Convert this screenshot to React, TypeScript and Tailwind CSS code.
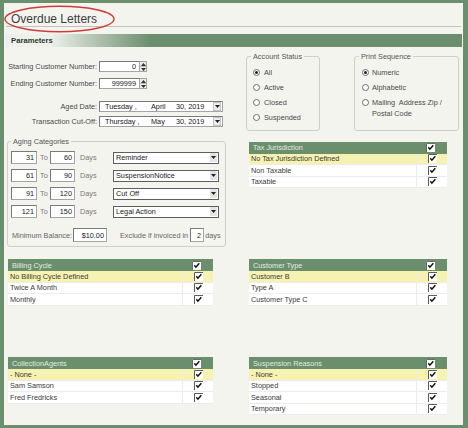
import React from "react";

const F = "font-['Liberation_Sans',Arial,sans-serif]";

function RowCheck() {
  return (
    <svg width="9" height="9" viewBox="0 0 9 9" className="block">
      <rect x="0" y="0" width="9" height="9" fill="#fff" />
      <path d="M0.5 9V0.5H9" stroke="#5a5a5a" fill="none" />
      <path d="M2.3 4.3L3.9 6.2L7.3 2.3" stroke="#111" strokeWidth="1.5" fill="none" />
    </svg>
  );
}

function HeadCheck() {
  return (
    <svg width="9" height="9" viewBox="0 0 9 9" className="block">
      <rect x="0" y="0" width="9" height="9" fill="#fff" />
      <path d="M0.5 9V0.5H9" stroke="#6a6a6a" fill="none" />
      <path d="M2.3 4.3L3.9 6.2L7.3 2.3" stroke="#111" strokeWidth="1.5" fill="none" />
    </svg>
  );
}

function Table({ title, rows, w }: { title: string; rows: string[]; w: string }) {
  return (
    <div className={`bg-white ${w}`}>
      <div className="flex h-[12px] items-center bg-[#6b8e6d] text-[#e2ece2]">
        <div className="flex-1 pl-[4px]">{title}</div>
        <div className="flex w-[31px] justify-center pr-[2px]">
          <HeadCheck />
        </div>
      </div>
      {rows.map((r, i) => (
        <div
          key={r}
          className={`flex h-[11.5px] items-center border-b border-[#ececec] ${i === 0 ? "bg-[#f6f2b2]" : "bg-white"}`}
        >
          <div className="flex-1 pl-[2px] text-[#3a3a3a]">{r}</div>
          <div className="flex h-full w-[31px] items-center justify-center border-l border-[#ececec]">
            <RowCheck />
          </div>
        </div>
      ))}
    </div>
  );
}

function DownTri() {
  return (
    <svg width="5" height="3" viewBox="0 0 5 3" className="block">
      <path d="M0 0L2.5 3L5 0Z" fill="#222" />
    </svg>
  );
}

function NumSpin({ value }: { value: string }) {
  return (
    <div className="ml-[2px] flex h-[11px]">
      <div className="flex w-[41px] items-center justify-end border border-[#a4a4a4] border-l-[#7a7a7a] border-t-[#7a7a7a] bg-white pr-[3px] text-[#222]">
        {value}
      </div>
      <div className="flex w-[7px] flex-col border-y border-r border-[#a4a4a4] bg-[#ebebeb]">
        <div className="flex flex-1 items-center justify-center border-b border-[#bdbdbd]">
          <svg width="5" height="3" viewBox="0 0 5 3" className="block">
            <path d="M0 3L2.5 0L5 3Z" fill="#333" />
          </svg>
        </div>
        <div className="flex flex-1 items-center justify-center">
          <svg width="5" height="3" viewBox="0 0 5 3" className="block">
            <path d="M0 0L2.5 3L5 0Z" fill="#333" />
          </svg>
        </div>
      </div>
    </div>
  );
}

function DateBox({ day, month }: { day: string; month: string }) {
  return (
    <div className="ml-[2px] flex h-[11px] w-[124px] items-center border border-[#a4a4a4] border-l-[#7a7a7a] border-t-[#7a7a7a] bg-white text-[#222]">
      <span className="w-[51px] whitespace-nowrap pl-[5px]">{day} ,</span>
      <span className="w-[25px] whitespace-nowrap">{month}</span>
      <span className="flex-1 whitespace-nowrap">30, 2019</span>
      <div className="mr-[1px] flex h-[9px] w-[8px] items-center justify-center border border-[#c4c4c4] bg-[#ececec]">
        <DownTri />
      </div>
    </div>
  );
}

function InBox({ w, children }: { w: string; children: React.ReactNode }) {
  return (
    <div
      className={`flex h-[13px] items-center justify-end border border-[#a4a4a4] border-l-[#7a7a7a] border-t-[#7a7a7a] bg-white pr-[2px] text-[#222] ${w}`}
    >
      {children}
    </div>
  );
}

function Drop({ label }: { label: string }) {
  return (
    <div className="flex h-[12px] w-[106px] items-center border border-[#5e5e5e] bg-white text-[#222]">
      <span className="flex-1 pl-[2px]">{label}</span>
      <div className="mr-[1px] flex h-[9px] w-[7px] items-center justify-center bg-[#e4e4e4]">
        <DownTri />
      </div>
    </div>
  );
}

function AgingRow({ a, b, label }: { a: string; b: string; label: string }) {
  return (
    <div className="mt-[5px] flex h-[13px] items-center">
      <InBox w="w-[26px]">{a}</InBox>
      <span className="ml-[3px] w-[10px] text-[#7a7a7a]">To</span>
      <InBox w="w-[25px]">{b}</InBox>
      <span className="ml-[5px] w-[33px] text-[#7a7a7a]">Days</span>
      <Drop label={label} />
    </div>
  );
}

function Radio({ on, children, gap }: { on?: boolean; children: React.ReactNode; gap: string }) {
  return (
    <div className="flex h-[15px] items-start pt-[2px] leading-[11px]">
      <div className="mt-[2px] flex h-[7px] w-[7px] shrink-0 items-center justify-center rounded-full border border-[#6e6e6e] bg-white">
        {on && <div className="h-[3px] w-[3px] rounded-full bg-[#222]" />}
      </div>
      <div className={`${gap} text-[#4a4a4a]`}>{children}</div>
    </div>
  );
}

export default function App() {
  return (
    <div
      className={`${F} h-[428px] w-[468px] bg-[#6b8e6d] pb-[3px] pl-[4px] pr-[5px] pt-[3px] text-[7.3px] leading-[9px]`}
    >
      <div className="relative h-full bg-[#f4f4ee]">
        <div className="pl-[7px] pt-[9px] text-[12px] leading-[14px] text-[#3c3c3c]">Overdue Letters</div>
        <div className="mx-[2px] h-px bg-[#c2c2bc]" />
        <div className="mx-[1px] mt-[7px] flex h-[13px] items-center bg-linear-to-r from-[#eef0eb] from-10% to-[#6b8e6d] to-32% pl-[6px] text-[7.7px] font-bold text-[#2c3a2c]">
          Parameters
        </div>
        <svg className="absolute left-0 top-[2px]" width="112" height="30" viewBox="0 0 112 30">
          <ellipse cx="55.5" cy="14" rx="54.5" ry="12.8" stroke="#d03a3a" strokeWidth="1.4" fill="none" />
        </svg>

        <div className="flex">
          {/* left column */}
          <div className="w-[227px]">
            <div className="mt-[14px] flex h-[11px] items-center">
              <div className="w-[93px] text-right text-[#4a4a4a]">Starting Customer Number:</div>
              <NumSpin value="0" />
            </div>
            <div className="mt-[6px] flex h-[11px] items-center">
              <div className="w-[93px] text-right text-[#4a4a4a]">Ending Customer Number:</div>
              <NumSpin value="999999" />
            </div>
            <div className="mt-[12px] flex h-[11px] items-center">
              <div className="w-[93px] text-right text-[#4a4a4a]">Aged Date:</div>
              <DateBox day="Tuesday" month="April" />
            </div>
            <div className="mt-[4px] flex h-[11px] items-center">
              <div className="w-[93px] text-right text-[#4a4a4a]">Transaction Cut-Off:</div>
              <DateBox day="Thursday" month="May" />
            </div>

            <fieldset className="ml-[3px] mt-[10px] h-[110px] w-[219px] rounded-[3px] border border-[#cfcfc6] px-[3px]">
              <legend className="px-[2px] text-[#555]">Aging Categories</legend>
              <AgingRow a="31" b="60" label="Reminder" />
              <AgingRow a="61" b="90" label="SuspensionNotice" />
              <AgingRow a="91" b="120" label="Cut Off" />
              <AgingRow a="121" b="150" label="Legal Action" />
              <div className="mt-[10px] flex h-[14px] items-center">
                <div className="w-[61px] text-right text-[#666]">Minimum Balance:</div>
                <div className="ml-[1px] flex h-[14px] w-[34px] items-center justify-end border border-[#a4a4a4] border-l-[#7a7a7a] border-t-[#7a7a7a] bg-white pr-[2px] text-[#222]">
                  $10.00
                </div>
                <div className="ml-[13px] text-[#666]">Exclude if invoiced in</div>
                <div className="ml-[2px] flex h-[14px] w-[14px] items-center justify-end border border-[#a4a4a4] border-l-[#7a7a7a] border-t-[#7a7a7a] bg-white pr-[2px] text-[#222]">
                  2
                </div>
                <div className="ml-[1px] text-[#666]">days</div>
              </div>
            </fieldset>
          </div>

          {/* right column */}
          <div className="flex-1">
            <div className="flex">
              <fieldset className="ml-[15px] mt-[4.5px] h-[79px] w-[74px] rounded-[3px] border border-[#cfcfc6] px-[4px]">
                <legend className="px-[2px] text-[#555]">Account Status</legend>
                <div className="pl-[2px] pt-[4px]">
                  <Radio on gap="ml-[4px]">All</Radio>
                  <Radio gap="ml-[4px]">Active</Radio>
                  <Radio gap="ml-[4px]">Closed</Radio>
                  <Radio gap="ml-[4px]">Suspended</Radio>
                </div>
              </fieldset>
              <fieldset className="ml-[34px] mt-[4.5px] h-[79px] w-[105px] rounded-[3px] border border-[#cfcfc6] px-[4px]">
                <legend className="px-[2px] text-[#555]">Print Sequence</legend>
                <div className="pl-[3px] pt-[4px]">
                  <Radio on gap="ml-[3px]">Numeric</Radio>
                  <Radio gap="ml-[3px]">Alphabetic</Radio>
                  <Radio gap="ml-[3px]">
                    Mailing&nbsp; Address Zip /<br />
                    Postal Code
                  </Radio>
                </div>
              </fieldset>
            </div>
            <div className="ml-[18px] mt-[11px]">
              <Table
                title="Tax Jurisdiction"
                rows={["No Tax Jurisdiction Defined", "Non Taxable", "Taxable"]}
                w="w-[198px]"
              />
            </div>
          </div>
        </div>

        <div className="mt-[12px] flex items-start">
          <div className="ml-[4px]">
            <Table title="Billing Cycle" rows={["No Billing Cycle Defined", "Twice A Month", "Monthly"]} w="w-[205px]" />
          </div>
          <div className="ml-[36px]">
            <Table title="Customer Type" rows={["Customer B", "Type A", "Customer Type C"]} w="w-[198px]" />
          </div>
        </div>

        <div className="mt-[51.5px] flex items-start">
          <div className="ml-[4px]">
            <Table title="CollectionAgents" rows={["- None -", "Sam Samson", "Fred Fredricks"]} w="w-[205px]" />
          </div>
          <div className="ml-[36px]">
            <Table
              title="Suspension Reasons"
              rows={["- None -", "Stopped", "Seasonal", "Temporary"]}
              w="w-[198px]"
            />
          </div>
        </div>
      </div>
    </div>
  );
}
